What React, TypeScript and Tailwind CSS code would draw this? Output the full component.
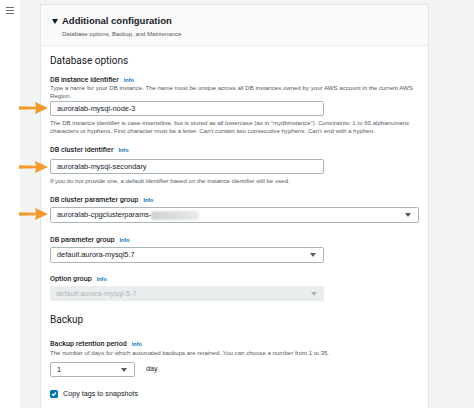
import React from "react";

const font = { fontFamily: '"Liberation Sans", Arial, sans-serif' };
const roboto = { fontFamily: 'Roboto, "Liberation Sans", Arial, sans-serif' };

function Caret({ disabled }: { disabled?: boolean }) {
  return (
    <svg width="6" height="4" viewBox="0 0 6 4" className="shrink-0">
      <path d="M0 0 L6 0 L3 4 Z" fill={disabled ? "#aab7b8" : "#545b64"} />
    </svg>
  );
}

function Label({ text, className = "" }: { text: string; className?: string }) {
  return (
    <div className={`h-[8px] leading-[8px] flex items-center gap-[5px] ${className}`}>
      <span className="text-[7.2px] font-medium text-[#16191f]" style={roboto}>{text}</span>
      <span className="text-[5.5px] font-bold text-[#0073bb]">Info</span>
    </div>
  );
}

function Arrow({ top }: { top: number }) {
  return (
    <svg
      width="30"
      height="14"
      viewBox="0 0 30 14"
      className="absolute left-[19px]"
      style={{ top: top - 7 }}
    >
      <path d="M0 5.3 L17 5.8 L16 1 L29 7 L16 13 L17 8.2 L0 8.7 Z" fill="#f39a2b" />
    </svg>
  );
}

export default function App() {
  return (
    <div
      className="relative w-[474px] h-[408px] flex bg-[#f2f3f3] overflow-hidden"
      style={font}
    >
      <div className="w-[20px] h-full bg-white shrink-0 pt-[7px] pl-[6px]">
        <svg width="8" height="7" viewBox="0 0 8 7">
          <rect x="0" y="0" width="8" height="1" fill="#687078" />
          <rect x="0" y="3" width="8" height="1" fill="#687078" />
          <rect x="0" y="6" width="8" height="1" fill="#687078" />
        </svg>
      </div>
      <div className="ml-[20px] mt-[4px] w-[389px] h-[420px] shrink-0 bg-white border border-[#e3e6e6]">
        <div className="h-[41px] bg-[#fafafa] border-b border-[#eaeded] pl-[11px] pt-[9px]">
          <div className="flex items-center gap-[4px] h-[14px]">
            <svg width="6" height="5" viewBox="0 0 6 5">
              <path d="M0 0 L6 0 L3 5 Z" fill="#16191f" />
            </svg>
            <span className="text-[9.5px] font-bold text-[#16191f]">Additional configuration</span>
          </div>
          <div className="ml-[10px] mt-[2px] text-[6px] leading-[8px] text-[#545b64]">
            Database options, Backup, and Maintenance
          </div>
        </div>
        <div className="pl-[9px] pr-[10px]">
          <div className="mt-[8px] h-[14px] leading-[14px] text-[10px] text-[#16191f]" style={roboto}>Database options</div>

          <Label text="DB instance identifier" className="mt-[8px]" />
          <div className="text-[6.1px] leading-[8px] text-[#545b64] w-[368px]">
            Type a name for your DB instance. The name must be unique across all DB instances owned by your AWS account in the current AWS Region.
          </div>
          <div className="mt-[1px] w-[274px] h-[15px] border border-[#aab7b8] rounded-[2px] flex items-center pl-[6px] text-[7.4px] text-[#16191f]">
            auroralab-mysql-node-3
          </div>
          <div className="mt-[3px] text-[6.1px] leading-[8px] text-[#545b64] w-[372px]">
            The DB instance identifier is case-insensitive, but is stored as all lowercase (as in "mydbinstance"). Constraints: 1 to 60 alphanumeric characters or hyphens. First character must be a letter. Can't contain two consecutive hyphens. Can't end with a hyphen.
          </div>

          <Label text="DB cluster identifier" className="mt-[11px]" />
          <div className="mt-[5px] w-[274px] h-[15px] border border-[#aab7b8] rounded-[2px] flex items-center pl-[6px] text-[7.4px] text-[#16191f]">
            auroralab-mysql-secondary
          </div>
          <div className="mt-[3px] text-[6.1px] leading-[8px] text-[#545b64]">
            If you do not provide one, a default identifier based on the instance identifier will be used.
          </div>

          <Label text="DB cluster parameter group" className="mt-[11px]" />
          <div className="mt-[3px] w-[369px] h-[16px] border border-[#aab7b8] rounded-[2px] flex items-center pl-[6px] pr-[7px] text-[7.4px] text-[#16191f]">
            <span>auroralab-cpgclusterparams-</span>
            <span className="w-[48px] h-[9px] rounded-[3px] bg-gradient-to-r from-[#cfd1d3] via-[#dcdddf] to-[#eaebec] blur-[1px]" />
            <span className="flex-1" />
            <Caret />
          </div>

          <Label text="DB parameter group" className="mt-[13px]" />
          <div className="mt-[3px] w-[274px] h-[16px] border border-[#aab7b8] rounded-[2px] flex items-center pl-[6px] pr-[7px] text-[7.4px] text-[#16191f]">
            <span className="flex-1">default.aurora-mysql5.7</span>
            <Caret />
          </div>

          <Label text="Option group" className="mt-[12px]" />
          <div className="mt-[3px] w-[274px] h-[15px] bg-[#eaeded] rounded-[2px] flex items-center pl-[6px] pr-[7px] text-[7.4px] text-[#aab7b8]">
            <span className="flex-1">default:aurora-mysql-5-7</span>
            <Caret disabled />
          </div>

          <div className="mt-[12px] h-[14px] leading-[14px] text-[10px] text-[#16191f]" style={roboto}>Backup</div>

          <Label text="Backup retention period" className="mt-[13px]" />
          <div className="mt-[1px] text-[6.1px] leading-[8px] text-[#545b64]">
            The number of days for which automated backups are retained. You can choose a number from 1 to 35.
          </div>
          <div className="mt-[5px] flex items-center gap-[11px]">
            <div className="w-[85px] h-[15px] border border-[#aab7b8] rounded-[2px] flex items-center pl-[6px] pr-[7px] text-[7.4px] text-[#16191f]">
              <span className="flex-1">1</span>
              <Caret />
            </div>
            <span className="text-[7.2px] text-[#16191f]">day</span>
          </div>

          <div className="mt-[12px] h-[10px] flex items-center gap-[5px]">
            <div className="w-[8px] h-[8px] rounded-[1.5px] bg-[#0073bb] flex items-center justify-center">
              <svg width="6" height="6" viewBox="0 0 6 6">
                <path d="M1 3 L2.5 4.5 L5 1.5" stroke="white" strokeWidth="1.2" fill="none" />
              </svg>
            </div>
            <span className="text-[7.2px] text-[#16191f]">Copy tags to snapshots</span>
          </div>
        </div>
      </div>
      <div className="flex-1" />
      <Arrow top={108} />
      <Arrow top={167} />
      <Arrow top={214} />
    </div>
  );
}
